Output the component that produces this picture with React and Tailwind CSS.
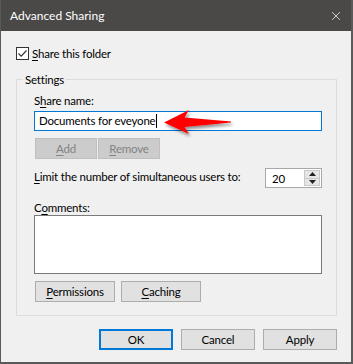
import React from 'react';
import { X } from 'lucide-react';

const Btn = ({ children, disabled, primary, width = 'w-[74px]' }) => (
    <div
        className={`${width} h-[21px] flex items-center justify-center leading-none ${
            disabled
                ? 'bg-[#cccccc] border border-[#bfbfbf] text-[#838383]'
                : primary
                ? 'bg-[#e1e1e1] border-2 border-[#0078d7]'
                : 'bg-[#e1e1e1] border border-[#adadad]'
        }`}
    >
        {children}
    </div>
);

const Arrow = () => (
    <svg className="absolute left-[156px] top-[104px]" width="84" height="40" viewBox="0 0 84 40">
        <defs>
            <filter id="sh" x="-20%" y="-40%" width="150%" height="200%">
                <feDropShadow dx="1.5" dy="2.5" stdDeviation="1.8" floodColor="#000" floodOpacity="0.45" />
            </filter>
        </defs>
        <path
            d="M7 18.5 L32 6 L27.5 13.5 L74 17.5 L74 18.5 L27.5 23 L32 30 Z"
            fill="#ff0000"
            filter="url(#sh)"
        />
    </svg>
);

export default function App() {
    return (
        <div className="relative w-[353px] h-[364px] flex flex-col bg-[#f0f0f0] border-l border-r-2 border-b-2 border-[#5a5a5a] font-['Lato',sans-serif] text-[11.5px] tracking-[-0.2px] text-black whitespace-nowrap">
            {/* Title bar */}
            <div className="h-[31px] shrink-0 bg-[#4b4947] flex items-center justify-between pl-[9px] pr-[8px] text-white">
                <span className="text-[12px] tracking-normal">Advanced Sharing</span>
                <X className="w-[14px] h-[14px]" strokeWidth={1.3} />
            </div>

            <div className="pl-[15px] pt-[16px]">
                {/* Share checkbox */}
                <div className="flex items-center h-[13px]">
                    <div className="w-[13px] h-[13px] border border-[#333333] bg-white flex items-center justify-center">
                        <svg width="11" height="11" viewBox="0 0 11 11">
                            <path d="M1.5 5.5 L4.2 8.2 L9.5 2.5" fill="none" stroke="#333" strokeWidth="1.2" />
                        </svg>
                    </div>
                    <span className="ml-[3px] leading-[13px]">
                        <u className="underline-offset-2">S</u>hare this folder
                    </span>
                </div>

                {/* Settings group */}
                <div className="mt-[19px] w-[321px] border border-[#dcdcdc] pl-[17px] pb-[13px]">
                    <div className="-mt-[8px] -ml-[11px] w-fit px-[2px] bg-[#f0f0f0] leading-[15px]">Settings</div>

                    <div className="mt-[6px] leading-[15px]">
                        S<u className="underline-offset-2">h</u>are name:
                    </div>
                    <div className="mt-[3px] w-[288px] h-[20px] border border-[#0078d7] bg-white flex items-center pl-[4px]">
                        <span className="leading-none">Documents for eveyone</span>
                        <span className="ml-[1px] w-[1px] h-[14px] bg-black" />
                    </div>

                    <div className="mt-[7px] flex gap-[1px] ml-[1px]">
                        <Btn disabled width="w-[62px]">
                            <span><u className="underline-offset-2">A</u>dd</span>
                        </Btn>
                        <Btn disabled width="w-[62px]">
                            <span><u className="underline-offset-2">R</u>emove</span>
                        </Btn>
                    </div>

                    <div className="mt-[9px] w-[288px] flex items-center justify-between">
                        <span className="leading-[15px] -mt-[3px]">
                            <u className="underline-offset-2">L</u>imit the number of simultaneous users to:
                        </span>
                        <div className="w-[57px] h-[20px] border border-[#a8a8a8] bg-white flex">
                            <span className="flex-1 pl-[6px] flex items-center leading-none pt-[2px]">20</span>
                            <div className="w-[17px] flex flex-col p-[1px] pl-0">
                                <div className="flex-1 bg-[#e6e6e6] border border-[#c8c8c8] flex items-center justify-center">
                                    <svg width="7" height="4" viewBox="0 0 7 4"><path d="M0 4 L3.5 0 L7 4 Z" fill="#222" /></svg>
                                </div>
                                <div className="flex-1 bg-[#e6e6e6] border border-[#c8c8c8] border-t-0 flex items-center justify-center">
                                    <svg width="7" height="4" viewBox="0 0 7 4"><path d="M0 0 L3.5 4 L7 0 Z" fill="#222" /></svg>
                                </div>
                            </div>
                        </div>
                    </div>

                    <div className="mt-[13px] h-[14px] leading-[14px]">
                        C<u className="underline-offset-2">o</u>mments:
                    </div>
                    <div className="w-[288px] h-[59px] border border-[#7a7a7a] bg-white" />

                    <div className="mt-[7px] flex gap-[6px] ml-[1px]">
                        <Btn width="w-[80px]">
                            <span><u className="underline-offset-2">P</u>ermissions</span>
                        </Btn>
                        <Btn width="w-[80px]">
                            <span><u className="underline-offset-2">C</u>aching</span>
                        </Btn>
                    </div>
                </div>

                {/* Dialog buttons */}
                <div className="mt-[13px] w-[321px] flex justify-end gap-[8px]">
                    <Btn primary>OK</Btn>
                    <Btn>Cancel</Btn>
                    <Btn>Apply</Btn>
                </div>
            </div>

            <Arrow />
        </div>
    );
}
